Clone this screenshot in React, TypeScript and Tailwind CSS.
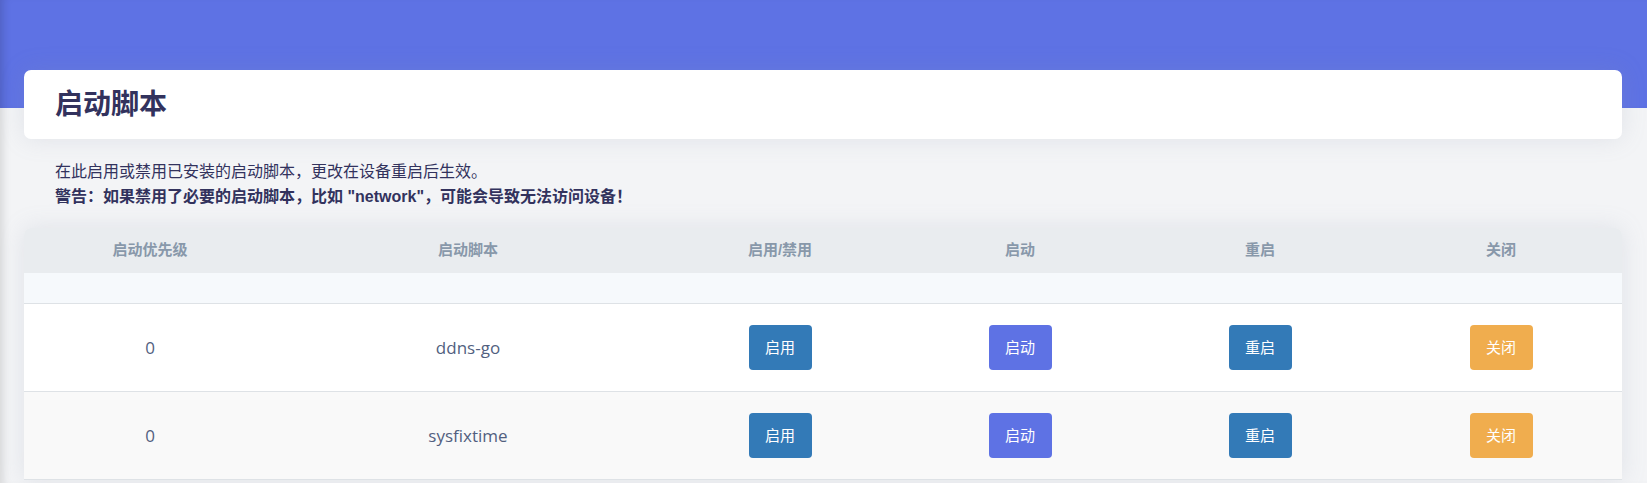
import React from "react";

const rows = [
  { p: "0", name: "ddns-go", bg: "bg-white" },
  { p: "0", name: "sysfixtime", bg: "bg-[#f9f9f9]" },
];

const cols = "grid grid-cols-[252px_384px_240px_240px_240px_242px]";

function Btn({ label, color }: { label: string; color: string }) {
  return (
    <button
      className={`${color} h-[45px] w-[63px] rounded-[4px] text-[15px] text-white`}
      style={{ fontFamily: '"Noto Sans CJK SC", sans-serif' }}
    >
      {label}
    </button>
  );
}

export default function App() {
  return (
    <div
      className="min-h-[483px] bg-[#f3f4f6] shadow-[inset_9px_0_8px_-6px_rgba(0,0,0,0.12)] overflow-hidden"
      style={{ fontFamily: '"Liberation Sans", "Noto Sans CJK SC", sans-serif' }}
    >
      <div className="h-[108px] bg-[#5e72e4] shadow-[inset_9px_0_8px_-6px_rgba(0,0,0,0.15)]" />
      <div className="-mt-[38px] pl-[24px] pr-[25px]">
        <div className="flex h-[69px] items-center rounded-[7px] bg-white pl-[31px] shadow-[0_0_24px_0_rgba(136,152,170,0.18)]">
          <h1 className="text-[28px] font-bold text-[#32325d]">启动脚本</h1>
        </div>
        <div className="mt-[20px] pl-[31px] text-[16px] leading-[25px] text-[#32325d]">
          <p>在此启用或禁用已安装的启动脚本，更改在设备重启后生效。</p>
          <p className="font-bold">警告：如果禁用了必要的启动脚本，比如 "network"，可能会导致无法访问设备！</p>
        </div>
        <div className="mt-[19px] rounded-t-[7px] shadow-[0_0_24px_0_rgba(136,152,170,0.18)]">
          <div className={`${cols} h-[45px] items-center rounded-t-[7px] bg-[#e9ecef] text-center text-[15px] font-bold text-[#8898aa]`}>
            <div>启动优先级</div>
            <div>启动脚本</div>
            <div>启用/禁用</div>
            <div>启动</div>
            <div>重启</div>
            <div>关闭</div>
          </div>
          <div className="h-[31px] border-b border-[#dee2e6] bg-[#f6f9fc]" />
          {rows.map((r) => (
            <div
              key={r.name}
              className={`${cols} h-[88px] items-center border-b border-[#dee2e6] ${r.bg} text-center text-[17px] text-[#525f7f]`}
              style={{ fontFamily: '"Open Sans", "Noto Sans CJK SC", sans-serif' }}
            >
              <div>{r.p}</div>
              <div>{r.name}</div>
              <div className="flex justify-center">
                <Btn label="启用" color="bg-[#337ab7]" />
              </div>
              <div className="flex justify-center">
                <Btn label="启动" color="bg-[#5e72e4]" />
              </div>
              <div className="flex justify-center">
                <Btn label="重启" color="bg-[#337ab7]" />
              </div>
              <div className="flex justify-center">
                <Btn label="关闭" color="bg-[#f0ad4e]" />
              </div>
            </div>
          ))}
        </div>
      </div>
    </div>
  );
}
